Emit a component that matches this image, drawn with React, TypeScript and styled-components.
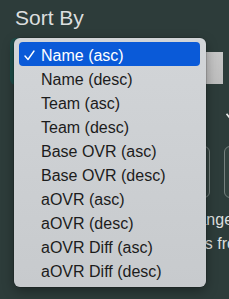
import React from 'react';
import styled, { createGlobalStyle } from 'styled-components';

const GlobalStyle = createGlobalStyle`
  html, body {
    margin: 0;
    padding: 0;
    background: #2d3c3a;
    overflow: hidden;
  }
  body {
    font-family: "Liberation Sans", Arial, sans-serif;
  }
`;

const Page = styled.div`
  position: relative;
  width: 229px;
  height: 299px;
  overflow: hidden;
  padding: 6px 0 0 10px;
  box-sizing: border-box;
`;

const Title = styled.div`
  font-size: 21px;
  line-height: 24px;
  color: #dcdfdf;
  padding-left: 5px;
`;

const FieldRow = styled.div`
  display: flex;
  align-items: flex-end;
  gap: 8px;
  margin-top: 8px;
  width: 400px;
`;

const SelectBox = styled.div`
  width: 188px;
  height: 47px;
  border-radius: 6px;
  background: #1d4e4a;
`;

const GrayInput = styled.div`
  width: 17px;
  height: 32px;
  margin-bottom: 1px;
  background: linear-gradient(#c6c6c6, #bdbdbd);
`;

const ChevronRow = styled.div`
  display: flex;
  justify-content: flex-end;
  align-items: flex-start;
  height: 27px;
  margin-top: 28px;
  margin-left: -6px;
  width: 230px;
`;

const ButtonRow = styled.div`
  display: flex;
  gap: 14px;
  margin-left: 100px;
  margin-top: 6px;
  width: 400px;
`;

const OutlineBox = styled.div<{ $w: number }>`
  width: ${(p) => p.$w}px;
  height: 52px;
  box-sizing: border-box;
  border: 1.5px solid #75807e;
  border-radius: 6px;
  background: #33423f;
`;

const Note = styled.div`
  margin-top: 10px;
  color: #dcdfdf;
  font-size: 16px;
  line-height: 24px;
  white-space: nowrap;
`;

const NoteLine = styled.div<{ $indent: number }>`
  padding-left: ${(p) => p.$indent}px;
`;

const Menu = styled.div`
  position: absolute;
  left: 14px;
  top: 38px;
  width: 192px;
  box-sizing: border-box;
  padding: 4px 6px 5px 5px;
  border-radius: 6px;
  background: linear-gradient(#d2d5d8, #c7cacd);
  box-shadow: 0 4px 12px rgba(0, 0, 0, 0.35), 0 0 0 0.5px rgba(0, 0, 0, 0.25);
`;

const Item = styled.div<{ $active?: boolean }>`
  position: relative;
  height: 24px;
  box-sizing: border-box;
  padding: 5px 0 0 22px;
  font-size: 16px;
  line-height: 18px;
  white-space: nowrap;
  border-radius: 4px;
  color: ${(p) => (p.$active ? '#ffffff' : '#1c1c1c')};
  background: ${(p) => (p.$active ? '#0a5ad8' : 'transparent')};
`;

const Check = styled.svg`
  position: absolute;
  left: 5px;
  top: 8px;
`;

const options = [
  'Name (asc)',
  'Name (desc)',
  'Team (asc)',
  'Team (desc)',
  'Base OVR (asc)',
  'Base OVR (desc)',
  'aOVR (asc)',
  'aOVR (desc)',
  'aOVR Diff (asc)',
  'aOVR Diff (desc)',
];

const App = () => {
  const selected = 0;
  return (
    <Page>
      <GlobalStyle />
      <Title>Sort By</Title>
      <FieldRow>
        <SelectBox />
        <GrayInput />
      </FieldRow>
      <ChevronRow>
        <svg width="8" height="6" viewBox="0 0 8 6">
          <path d="M0.5 0.8 L4 5 L7.5 0.8" fill="none" stroke="#e6e8e8" strokeWidth="1.8" />
        </svg>
      </ChevronRow>
      <ButtonRow>
        <OutlineBox $w={100} />
        <OutlineBox $w={100} />
      </ButtonRow>
      <Note>
        <NoteLine $indent={167}>Change</NoteLine>
        <NoteLine $indent={155}>Values from</NoteLine>
      </Note>
      <Menu>
        {options.map((opt, i) => (
          <Item key={opt} $active={i === selected}>
            {i === selected && (
              <Check width="11" height="11" viewBox="0 0 11 11">
                <path d="M1 6 L4 9.5 L10 1" fill="none" stroke="#ffffff" strokeWidth="1.4" strokeLinecap="round" strokeLinejoin="round" />
              </Check>
            )}
            {opt}
          </Item>
        ))}
      </Menu>
    </Page>
  );
};

export default App;
